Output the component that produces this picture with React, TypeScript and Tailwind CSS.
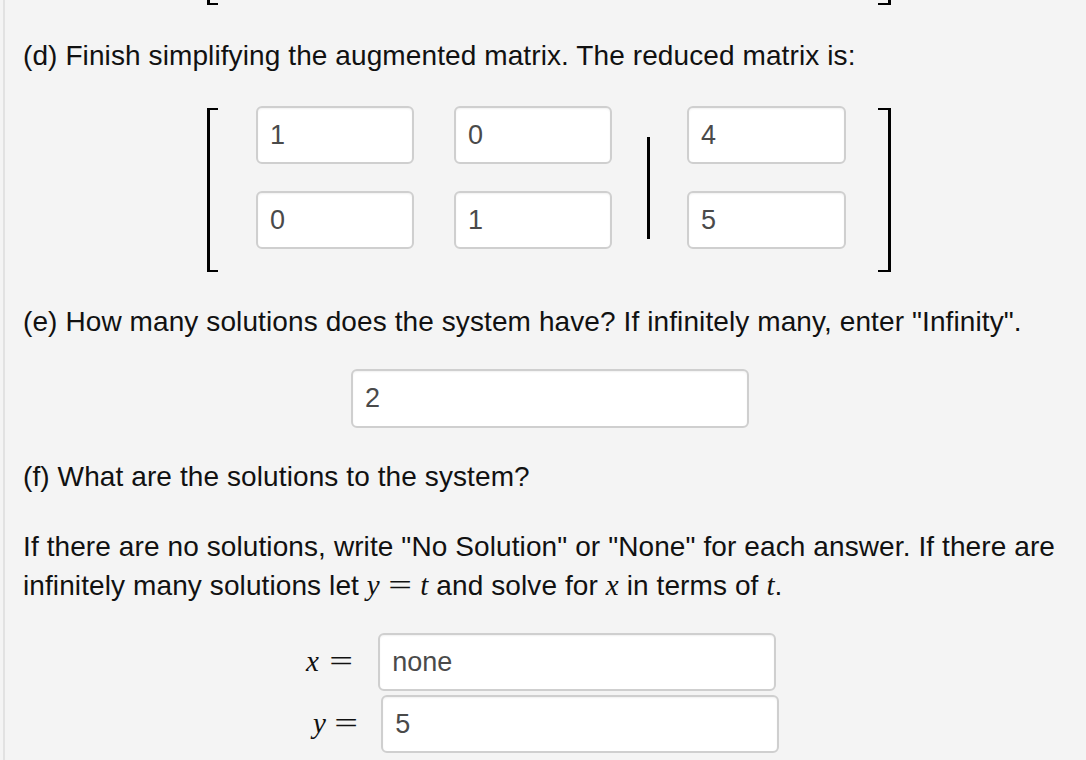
import React from "react";

const sans = { fontFamily: '"Liberation Sans", Arial, Helvetica, sans-serif' };
const serif = { fontFamily: '"Liberation Serif", "Times New Roman", serif' };

function Box({ value, className }: { value: string; className: string }) {
  return (
    <div
      className={`flex items-center rounded-[6px] border-2 border-[#cfcfcf] bg-white pl-[12px] text-[27px] text-[#4a4a4a] shadow-[inset_0_1px_2px_rgba(0,0,0,0.06)] ${className}`}
      style={sans}
    >
      {value}
    </div>
  );
}

function Var({ children }: { children: React.ReactNode }) {
  return (
    <span className="italic text-[29px]" style={serif}>
      {children}
    </span>
  );
}

function Eq() {
  return (
    <span className="inline-block scale-x-[1.45] text-[29px]" style={serif}>
      =
    </span>
  );
}

export default function App() {
  return (
    <div className="min-h-[760px] w-[1086px] bg-[#f4f4f4]" style={sans}>
      <div className="ml-[3px] min-h-[760px] border-l-2 border-[#e2e2e2] pl-[18px] text-[#111]">
        {/* remnants of previous matrix brackets */}
        <div className="flex h-[6px]">
          <div className="ml-[184px] h-[5px] w-[11px] border-b-2 border-l-[3px] border-black" />
          <div className="ml-[660px] h-[5px] w-[13px] border-b-2 border-r-[3px] border-black" />
        </div>

        <p className="mt-[31px] text-[28px] leading-[38px] tracking-[0.1px]">
          (d) Finish simplifying the augmented matrix. The reduced matrix is:
        </p>

        {/* matrix */}
        <div className="mt-[31px] flex h-[166px] items-start">
          <div className="ml-[184px] mt-[2px] h-[164px] w-[11px] border-y-2 border-l-[3px] border-black" />
          <div className="ml-[38px] flex flex-col gap-[27px]">
            <Box value="1" className="h-[58px] w-[158px]" />
            <Box value="0" className="h-[58px] w-[158px]" />
          </div>
          <div className="ml-[40px] flex flex-col gap-[27px]">
            <Box value="0" className="h-[58px] w-[158px]" />
            <Box value="1" className="h-[58px] w-[158px]" />
          </div>
          <div className="ml-[35px] mt-[31px] h-[102px] w-[3px] bg-black" />
          <div className="ml-[37px] flex flex-col gap-[27px]">
            <Box value="4" className="h-[58px] w-[159px]" />
            <Box value="5" className="h-[58px] w-[159px]" />
          </div>
          <div className="ml-[32px] mt-[2px] h-[164px] w-[13px] border-y-2 border-r-[3px] border-black" />
        </div>

        <p className="mt-[31px] text-[28px] leading-[38px] tracking-[0.1px]">
          (e) How many solutions does the system have? If infinitely many, enter "Infinity".
        </p>

        <div className="mt-[28px] flex">
          <Box value="2" className="ml-[328px] h-[59px] w-[398px]" />
        </div>

        <p className="mt-[30px] text-[28px] leading-[38px] tracking-[0.1px]">
          (f) What are the solutions to the system?
        </p>

        <div className="mt-[31px] text-[28px] leading-[39px] tracking-[0.1px]">
          <p>If there are no solutions, write "No Solution" or "None" for each answer. If there are</p>
          <p>
            infinitely many solutions let <Var>y</Var>
            <span className="mx-[12px]">
              <Eq />
            </span>
            <Var>t</Var> and solve for <Var>x</Var> in terms of <Var>t</Var>.
          </p>
        </div>

        <div className="mt-[28px] flex flex-col gap-[4px]">
          <div className="flex items-center">
            <div className="ml-[283px] flex items-center text-[29px]" style={serif}>
              <span className="italic">x</span>
              <span className="ml-[14px]">
                <Eq />
              </span>
            </div>
            <Box value="none" className="ml-[29px] h-[58px] w-[398px]" />
          </div>
          <div className="flex items-center">
            <div className="ml-[290px] flex items-center text-[29px]" style={serif}>
              <span className="italic">y</span>
              <span className="ml-[12px]">
                <Eq />
              </span>
            </div>
            <Box value="5" className="ml-[27px] h-[58px] w-[398px]" />
          </div>
        </div>
      </div>
    </div>
  );
}
